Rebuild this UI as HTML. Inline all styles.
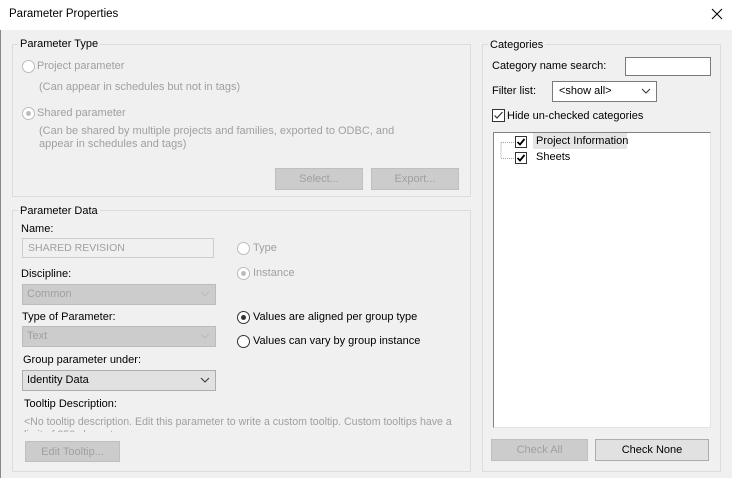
<!DOCTYPE html>
<html><head><style>
*{box-sizing:border-box;margin:0;padding:0}
body{width:732px;height:478px;background:#f0f0f0;font-family:"Liberation Sans",sans-serif;font-size:11px;color:#000;position:relative;overflow:hidden}
.a{position:absolute;white-space:nowrap;line-height:15px}
.g{position:absolute;border:1px solid #dcdcdc}
.lg{position:absolute;background:#f0f0f0;padding:0 2px;line-height:15px}
.dis{color:#a0a0a0}
.rb{position:absolute;width:13px;height:13px;border-radius:50%;border:1px solid #bcbcbc;background:#fff}
.rb.on{border-color:#333}
.rb .d{position:absolute;left:3px;top:3px;width:5px;height:5px;border-radius:50%;background:#bcbcbc}
.rb.on .d{background:#333}
.btn{position:absolute;border:1px solid #bfbfbf;background:#cccccc;color:#a0a0a0;text-align:center;line-height:20px}
.btn.en{background:#e1e1e1;border-color:#adadad;color:#000}
.cb{position:absolute;border:1px solid #bcbcbc;background:#cccccc;color:#a0a0a0;padding-left:4px;line-height:19px}
.chev{position:absolute;right:5px;top:4px}
</style></head><body>
<div class="a" style="left:0;top:0;width:732px;height:30px;background:#fff"></div>
<div class="a" style="left:9px;top:7px;font-size:11.5px">Parameter Properties</div>
<svg class="a" style="left:711px;top:8px" width="12" height="12"><path d="M1 1L11 11M11 1L1 11" stroke="#000" stroke-width="1.1"/></svg>
<div class="a" style="left:0;top:30px;width:1px;height:448px;background:#888"></div>

<div class="g" style="left:12px;top:44px;width:459px;height:153px"></div>
<div class="lg" style="left:18px;top:37px">Parameter Type</div>
<div class="rb" style="left:22px;top:60px"></div>
<div class="a dis" style="left:37px;top:59px">Project parameter</div>
<div class="a dis" style="left:39px;top:80px">(Can appear in schedules but not in tags)</div>
<div class="rb" style="left:22px;top:107px"><div class="d"></div></div>
<div class="a dis" style="left:37px;top:106px">Shared parameter</div>
<div class="a dis" style="left:39px;top:124px;line-height:13px;padding-top:1px">(Can be shared by multiple projects and families, exported to ODBC, and<br>appear in schedules and tags)</div>
<div class="btn" style="left:275px;top:168px;width:88px;height:22px">Select...</div>
<div class="btn" style="left:371px;top:168px;width:88px;height:22px">Export...</div>

<div class="g" style="left:12px;top:210px;width:459px;height:262px"></div>
<div class="lg" style="left:18px;top:204px">Parameter Data</div>
<div class="a" style="left:21px;top:222px">Name:</div>
<div class="a dis" style="left:22px;top:238px;width:192px;height:20px;border:1px solid #ccc;background:#f0f0f0;padding-left:5px;line-height:18px;font-size:10.5px">SHARED REVISION</div>
<div class="rb" style="left:237px;top:242px"></div>
<div class="a dis" style="left:253px;top:241px">Type</div>
<div class="rb" style="left:237px;top:267px"><div class="d"></div></div>
<div class="a dis" style="left:253px;top:266px">Instance</div>
<div class="a" style="left:21px;top:267px">Discipline:</div>
<div class="cb" style="left:22px;top:284px;width:194px;height:21px">Common<svg class="chev" width="10" height="10"><path d="M1 3L5 7L9 3" stroke="#bbb" fill="none"/></svg></div>
<div class="a" style="left:22px;top:310px">Type of Parameter:</div>
<div class="cb" style="left:22px;top:326px;width:194px;height:21px">Text<svg class="chev" width="10" height="10"><path d="M1 3L5 7L9 3" stroke="#bbb" fill="none"/></svg></div>
<div class="rb on" style="left:237px;top:311px"><div class="d"></div></div>
<div class="a" style="left:253px;top:310px">Values are aligned per group type</div>
<div class="rb on" style="left:237px;top:335px"></div>
<div class="a" style="left:253px;top:334px">Values can vary by group instance</div>
<div class="a" style="left:23px;top:353px">Group parameter under:</div>
<div class="cb" style="left:22px;top:370px;width:194px;height:21px;background:#e1e1e1;border-color:#adadad;color:#000">Identity Data<svg class="chev" width="10" height="10"><path d="M1 3L5 7L9 3" stroke="#333" fill="none"/></svg></div>
<div class="a" style="left:24px;top:397px">Tooltip Description:</div>
<div class="a dis" style="left:24px;top:415px;width:446px;height:17px;overflow:hidden;font-size:10.6px;line-height:13px;padding-top:1px;white-space:normal">&lt;No tooltip description. Edit this parameter to write a custom tooltip. Custom tooltips have a limit of 250 characters.&gt;</div>
<div class="btn" style="left:25px;top:441px;width:95px;height:21px">Edit Tooltip...</div>

<div class="g" style="left:482px;top:44px;width:239px;height:428px"></div>
<div class="lg" style="left:488px;top:38px">Categories</div>
<div class="a" style="left:492px;top:59px">Category name search:</div>
<div class="a" style="left:625px;top:57px;width:86px;height:19px;border:1px solid #7a7a7a;background:#fff"></div>
<div class="a" style="left:492px;top:84px">Filter list:</div>
<div class="a" style="left:552px;top:81px;width:105px;height:21px;border:1px solid #7a7a7a;background:#fff;padding-left:6px;line-height:19px">&lt;show all&gt;<svg class="chev" width="10" height="10"><path d="M1 3L5 7L9 3" stroke="#333" fill="none"/></svg></div>
<svg class="a" style="left:492px;top:109px" width="13" height="13"><rect x="0.5" y="0.5" width="12" height="12" fill="#fff" stroke="#333"/><path d="M2.5 6.5L5 9L10.5 3" stroke="#333" fill="none" stroke-width="1.2"/></svg>
<div class="a" style="left:507px;top:109px">Hide un-checked categories</div>
<div class="a" style="left:493px;top:132px;width:218px;height:296px;border:1px solid #828282;border-right-color:#e3e3e3;border-bottom-color:#e3e3e3;background:#fff"></div>
<svg class="a" style="left:500px;top:138px" width="20" height="24"><path d="M1 4.5H15M1 4.5V20.5H15" stroke="#a0a0a0" stroke-dasharray="1 1" fill="none"/></svg>
<svg class="a" style="left:515px;top:136px" width="12" height="12"><rect x="0.5" y="0.5" width="11" height="11" fill="#fff" stroke="#333"/><path d="M2.5 6L5 8.5L9.5 3" stroke="#000" fill="none" stroke-width="1.8"/></svg>
<svg class="a" style="left:515px;top:152px" width="12" height="12"><rect x="0.5" y="0.5" width="11" height="11" fill="#fff" stroke="#333"/><path d="M2.5 6L5 8.5L9.5 3" stroke="#000" fill="none" stroke-width="1.8"/></svg>
<div class="a" style="left:533px;top:133px;width:94px;height:16px;background:#e5e5e5"></div>
<div class="a" style="left:536px;top:134px">Project Information</div>
<div class="a" style="left:536px;top:150px">Sheets</div>
<div class="btn" style="left:491px;top:439px;width:97px;height:22px">Check All</div>
<div class="btn en" style="left:595px;top:439px;width:114px;height:22px">Check None</div>
</body></html>
